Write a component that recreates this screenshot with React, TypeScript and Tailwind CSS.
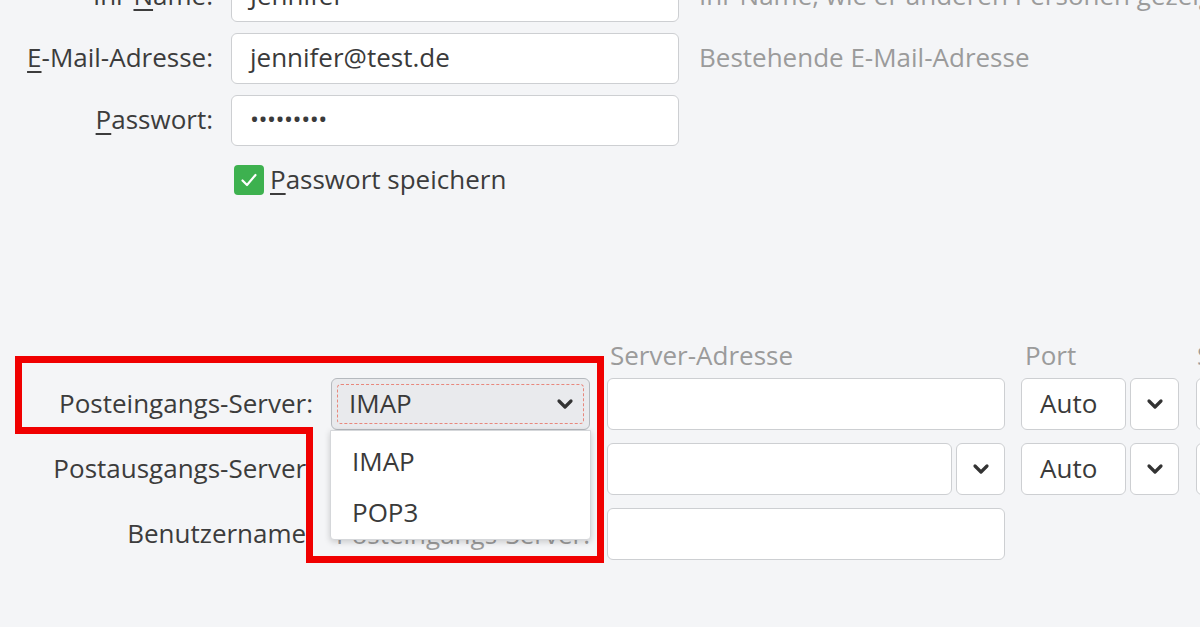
import React from 'react';
import { ChevronDown } from 'lucide-react';

const font = { fontFamily: '"Open Sans", "Noto Sans", sans-serif' };

function Field({ value, className = '' }: { value?: React.ReactNode; className?: string }) {
  return (
    <div className={`flex h-full items-center rounded-[6px] border border-[#cdcfd2] bg-white pb-[3px] pl-[18px] text-[#3a3a3a] ${className}`}>
      {value}
    </div>
  );
}

function DropBtn({ className = '' }: { className?: string }) {
  return (
    <div className={`flex h-full w-[49px] shrink-0 items-center justify-center rounded-[6px] border border-[#cdcfd2] bg-white text-[#333] ${className}`}>
      <ChevronDown size={24} strokeWidth={3.2} />
    </div>
  );
}

function TopRow({ label, value, hint }: { label: React.ReactNode; value?: React.ReactNode; hint?: string }) {
  return (
    <div className="flex h-[51px] items-center">
      <div className="w-[213px] shrink-0 whitespace-nowrap pb-[3px] text-right text-[#3c3c3c]">{label}</div>
      <div className="ml-[18px] h-full w-[448px] shrink-0">
        <Field value={value} />
      </div>
      {hint && <div className="ml-[20px] shrink-0 whitespace-nowrap pb-[3px] text-[#9b9b9b]">{hint}</div>}
    </div>
  );
}

export default function App() {
  return (
    <div className="relative h-[627px] w-[1200px] overflow-hidden bg-[#f4f5f7] text-[26px] leading-none" style={font}>
      <div className="-mt-[29px] flex flex-col gap-[11px]">
        <TopRow
          label={<>Ihr <u className="underline-offset-4">N</u>ame:</>}
          value="Jennifer"
          hint="Ihr Name, wie er anderen Personen gezeigt wird"
        />
        <TopRow
          label={<><u className="underline-offset-4">E</u>-Mail-Adresse:</>}
          value="jennifer@test.de"
          hint="Bestehende E-Mail-Adresse"
        />
        <TopRow
          label={<><u className="underline-offset-4">P</u>asswort:</>}
          value={<span className="text-[24px] tracking-[-0.5px]">•••••••••</span>}
        />
      </div>

      <div className="ml-[234px] mt-[19px] flex h-[30px] items-center gap-[6px]">
        <div className="flex h-[30px] w-[30px] shrink-0 items-center justify-center rounded-[4px] bg-[#3db14f]">
          <svg width="22" height="22" viewBox="0 0 22 22" fill="none" stroke="white" strokeWidth="2.2" strokeLinecap="round" strokeLinejoin="round">
            <path d="M4.5 11.5l4.5 4.5 8.5-10" />
          </svg>
        </div>
        <span className="whitespace-nowrap pb-[3px] text-[#3c3c3c]"><u className="underline-offset-4">P</u>asswort speichern</span>
      </div>

      {/* server table */}
      <div className="mt-[145px] flex flex-col">
        <div className="flex h-[30px] items-center whitespace-nowrap text-[#9b9b9b]">
          <div className="ml-[610px] w-[415px] shrink-0">Server-Adresse</div>
          <div className="w-[172px] shrink-0">Port</div>
          <div className="shrink-0">SSL</div>
        </div>
        <div className="mt-[8px] flex flex-col gap-[13px]">
          <div className="flex h-[52px] items-center">
            <div className="w-[313px] shrink-0 whitespace-nowrap pb-[3px] text-right text-[#3c3c3c]">Posteingangs-Server:</div>
            <div className="relative ml-[18px] flex h-full w-[259px] shrink-0 items-center justify-between rounded-[6px] border border-[#b5b9be] bg-[#e9eaed] pb-[3px] pl-[17px] pr-[12px] text-[#3a3a3a]">
              <span>IMAP</span>
              <ChevronDown size={24} strokeWidth={3.2} className="mt-[3px] text-[#333]" />
              <div className="absolute inset-[5px] rounded-[4px] border border-dashed border-[#e8877c]" />
            </div>
            <div className="ml-[17px] h-full w-[398px] shrink-0"><Field /></div>
            <div className="ml-[16px] h-full w-[105px] shrink-0"><Field value="Auto" /></div>
            <DropBtn className="ml-[4px]" />
            <div className="ml-[17px] h-full w-[60px] shrink-0"><Field /></div>
          </div>
          <div className="flex h-[52px] items-center">
            <div className="w-[313px] shrink-0 whitespace-nowrap pb-[3px] text-right text-[#3c3c3c]">Postausgangs-Server:</div>
            <div className="ml-[18px] w-[259px] shrink-0 pl-[17px] text-[#3a3a3a]">SMTP</div>
            <div className="ml-[17px] h-full w-[345px] shrink-0"><Field /></div>
            <DropBtn className="ml-[4px]" />
            <div className="ml-[16px] h-full w-[105px] shrink-0"><Field value="Auto" /></div>
            <DropBtn className="ml-[4px]" />
            <div className="ml-[17px] h-full w-[60px] shrink-0"><Field /></div>
          </div>
          <div className="flex h-[52px] items-center">
            <div className="w-[313px] shrink-0 whitespace-nowrap pb-[3px] text-right text-[#3c3c3c]">Benutzername:</div>
            <div className="ml-[18px] w-[259px] shrink-0 whitespace-nowrap pl-[5px] text-[#9b9b9b]">Posteingangs-Server:</div>
            <div className="ml-[17px] h-full w-[398px] shrink-0"><Field /></div>
          </div>
        </div>
      </div>

      {/* open dropdown list */}
      <div className="absolute left-[330px] top-[430px] flex h-[110px] w-[261px] flex-col rounded-b-[4px] border border-[#d5d7da] bg-white pl-[21px] text-[#3a3a3a] shadow-[0_2px_6px_rgba(0,0,0,0.18)]">
        <div className="flex h-[58px] items-center pb-[2px] pt-[4px]">IMAP</div>
        <div className="flex h-[48px] items-center pb-[3px]">POP3</div>
      </div>

      {/* annotation outline */}
      <svg className="pointer-events-none absolute left-0 top-0" width="1200" height="627">
        <path d="M18.5 359.5 H600.5 V559.5 H309.5 V430.5 H18.5 Z" fill="none" stroke="#f00000" strokeWidth="7" />
      </svg>
    </div>
  );
}
